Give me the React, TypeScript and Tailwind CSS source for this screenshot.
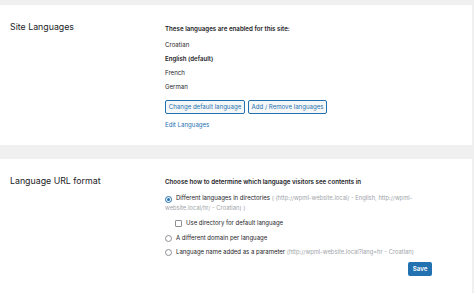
import React from "react";

const font = { fontFamily: "Inter, 'Liberation Sans', sans-serif" };

function Radio({ checked }: { checked?: boolean }) {
  return (
    <span
      className={`inline-flex h-[7px] w-[7px] shrink-0 items-center justify-center rounded-full border ${
        checked ? "border-[#2271b1]" : "border-[#8c8f94]"
      } bg-white`}
    >
      {checked && <span className="h-[3px] w-[3px] rounded-full bg-[#2271b1]" />}
    </span>
  );
}

export default function App() {
  return (
    <div className="h-[293px] w-[474px] overflow-hidden bg-[#f0f0f1] pt-[5px] text-[#1d2327]" style={font}>
      <div className="mr-[2px] flex h-[140px] bg-white">
        <div className="w-[165px] shrink-0 pl-[10px] pt-[12px] text-[8.8px] leading-[20px]">Site Languages</div>
        <div className="flex flex-col pt-[14px] text-[6.1px]">
          <div className="h-[19px] text-[6.2px] font-semibold leading-[19px]">These languages are enabled for this site:</div>
          <div className="h-[14px] leading-[14px]">Croatian</div>
          <div className="h-[14px] font-semibold leading-[14px]">English (default)</div>
          <div className="h-[14px] leading-[14px]">French</div>
          <div className="h-[14px] leading-[14px]">German</div>
          <div className="mt-[6px] flex gap-[3px]">
            <button className="h-[14px] w-[80px] whitespace-nowrap rounded-[2px] border border-[#2271b1] bg-[#f6f7f7] text-[6.1px] text-[#2271b1]">
              Change default language
            </button>
            <button className="h-[14px] w-[79px] whitespace-nowrap rounded-[2px] border border-[#2271b1] bg-[#f6f7f7] text-[6.1px] text-[#2271b1]">
              Add / Remove languages
            </button>
          </div>
          <div className="mt-[6px] leading-[10px] text-[#2271b1]">Edit Languages</div>
        </div>
      </div>
      <div className="h-[14px]" />
      <div className="mr-[2px] flex h-[140px] bg-white">
        <div className="w-[165px] shrink-0 pl-[10px] pt-[12px] text-[8.8px] leading-[20px]">Language URL format</div>
        <div className="flex w-[267px] flex-col pt-[18px] text-[6px]">
          <div className="h-[12px] text-[6.2px] font-semibold leading-[10px]">
            Choose how to determine which language visitors see contents in
          </div>
          <div className="mt-[4px] w-[258px] leading-[10px]">
            <span className="mr-[4px] inline-flex align-[-1px]">
              <Radio checked />
            </span>
            Different languages in directories{" "}
            <span className="text-[5.8px] text-[#a0a5aa]">
              ( (http://wpml-website.local/ - English, http://wpml-website.local/hr/ - Croatian) )
            </span>
          </div>
          <div className="mt-[5px] flex items-center gap-[4px] pl-[10px] leading-[10px]">
            <span className="h-[7px] w-[7px] rounded-[1px] border border-[#8c8f94] bg-white" />
            Use directory for default language
          </div>
          <div className="mt-[5px] flex items-center gap-[4px] leading-[10px]">
            <Radio />
            A different domain per language
          </div>
          <div className="mt-[4px] flex items-center gap-[4px] whitespace-nowrap leading-[10px]">
            <Radio />
            <span>
              Language name added as a parameter{" "}
              <span className="text-[5.8px] text-[#a0a5aa]">(http://wpml-website.local?lang=hr - Croatian)</span>
            </span>
          </div>
          <div className="mt-[5px] flex justify-end">
            <button className="h-[14px] w-[24px] rounded-[2px] bg-[#2271b1] text-[6.2px] font-semibold text-white">Save</button>
          </div>
        </div>
      </div>
    </div>
  );
}
